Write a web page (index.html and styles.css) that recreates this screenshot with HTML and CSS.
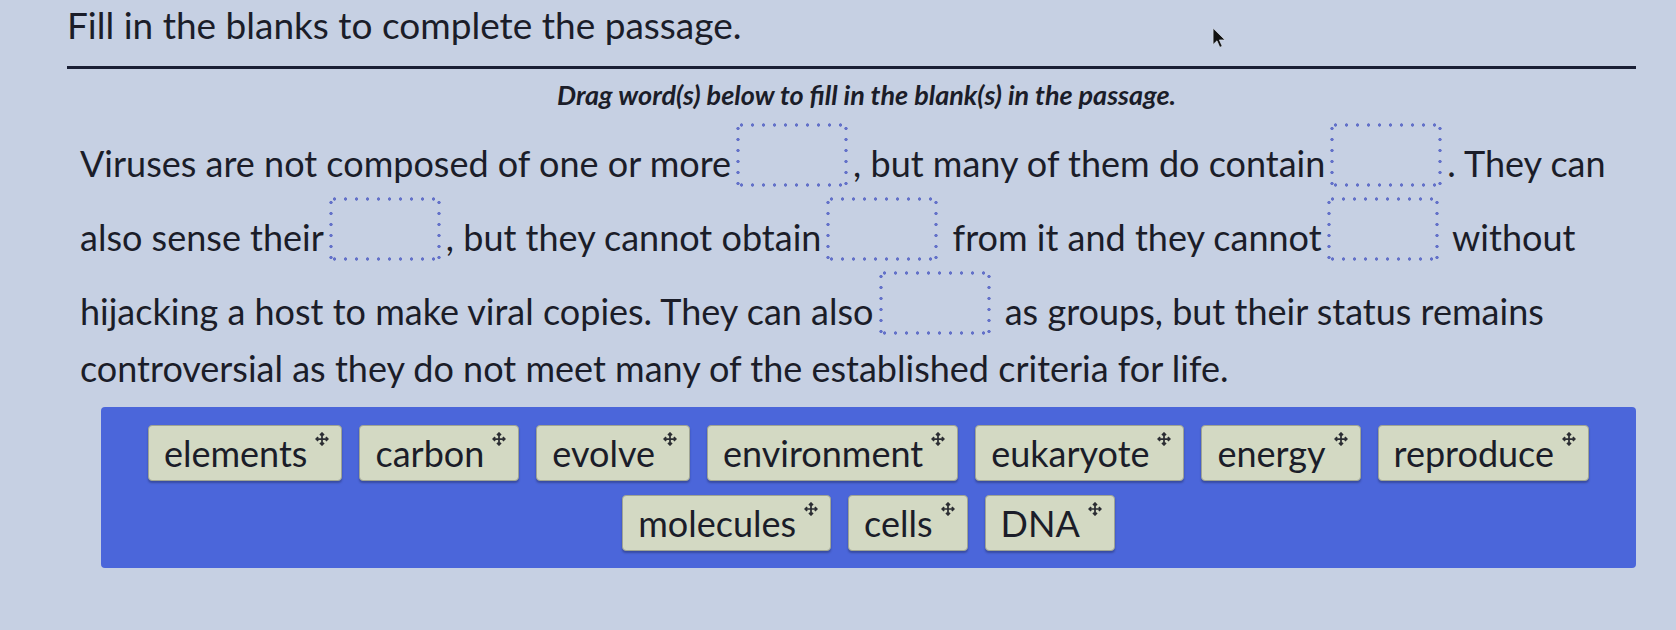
FILE: index.html
```html
<!DOCTYPE html>
<html lang="en">
<head>
    <meta charset="UTF-8">
    <meta name="viewport" content="width=device-width, initial-scale=1.0">
    <title>Fill in the blanks</title>
    <link rel="stylesheet" href="styles.css">
</head>
<body>
    <div class="page">
        <h1 class="title">Fill in the blanks to complete the passage.</h1>
        <hr class="rule">

        <p class="instructions">Drag word(s) below to fill in the blank(s) in the passage.</p>

        <p class="passage">
            Viruses are not composed of one or more<span class="blank"></span>, but many of them do contain<span class="blank"></span>. They can also sense their<span class="blank"></span>, but they cannot obtain<span class="blank"></span> from it and they cannot<span class="blank"></span> without hijacking a host to make viral copies. They can also<span class="blank"></span> as groups, but their status remains controversial as they do not meet many of the established criteria for life.
        </p>

        <div class="word-bank">
            <div class="word">elements<svg class="move" viewBox="0 0 12 12"><path d="M6 1v10M1 6h10M4.3 2.7L6 1l1.7 1.7M4.3 9.3L6 11l1.7-1.7M2.7 4.3L1 6l1.7 1.7M9.3 4.3L11 6 9.3 7.7"/></svg></div>
            <div class="word">carbon<svg class="move" viewBox="0 0 12 12"><path d="M6 1v10M1 6h10M4.3 2.7L6 1l1.7 1.7M4.3 9.3L6 11l1.7-1.7M2.7 4.3L1 6l1.7 1.7M9.3 4.3L11 6 9.3 7.7"/></svg></div>
            <div class="word">evolve<svg class="move" viewBox="0 0 12 12"><path d="M6 1v10M1 6h10M4.3 2.7L6 1l1.7 1.7M4.3 9.3L6 11l1.7-1.7M2.7 4.3L1 6l1.7 1.7M9.3 4.3L11 6 9.3 7.7"/></svg></div>
            <div class="word">environment<svg class="move" viewBox="0 0 12 12"><path d="M6 1v10M1 6h10M4.3 2.7L6 1l1.7 1.7M4.3 9.3L6 11l1.7-1.7M2.7 4.3L1 6l1.7 1.7M9.3 4.3L11 6 9.3 7.7"/></svg></div>
            <div class="word">eukaryote<svg class="move" viewBox="0 0 12 12"><path d="M6 1v10M1 6h10M4.3 2.7L6 1l1.7 1.7M4.3 9.3L6 11l1.7-1.7M2.7 4.3L1 6l1.7 1.7M9.3 4.3L11 6 9.3 7.7"/></svg></div>
            <div class="word">energy<svg class="move" viewBox="0 0 12 12"><path d="M6 1v10M1 6h10M4.3 2.7L6 1l1.7 1.7M4.3 9.3L6 11l1.7-1.7M2.7 4.3L1 6l1.7 1.7M9.3 4.3L11 6 9.3 7.7"/></svg></div>
            <div class="word">reproduce<svg class="move" viewBox="0 0 12 12"><path d="M6 1v10M1 6h10M4.3 2.7L6 1l1.7 1.7M4.3 9.3L6 11l1.7-1.7M2.7 4.3L1 6l1.7 1.7M9.3 4.3L11 6 9.3 7.7"/></svg></div>
            <div class="word">molecules<svg class="move" viewBox="0 0 12 12"><path d="M6 1v10M1 6h10M4.3 2.7L6 1l1.7 1.7M4.3 9.3L6 11l1.7-1.7M2.7 4.3L1 6l1.7 1.7M9.3 4.3L11 6 9.3 7.7"/></svg></div>
            <div class="word">cells<svg class="move" viewBox="0 0 12 12"><path d="M6 1v10M1 6h10M4.3 2.7L6 1l1.7 1.7M4.3 9.3L6 11l1.7-1.7M2.7 4.3L1 6l1.7 1.7M9.3 4.3L11 6 9.3 7.7"/></svg></div>
            <div class="word">DNA<svg class="move" viewBox="0 0 12 12"><path d="M6 1v10M1 6h10M4.3 2.7L6 1l1.7 1.7M4.3 9.3L6 11l1.7-1.7M2.7 4.3L1 6l1.7 1.7M9.3 4.3L11 6 9.3 7.7"/></svg></div>
        </div>
    </div>

    <!-- mouse pointer resting over the header -->
    <svg class="pointer" viewBox="0 0 12 20"><path d="M1 1v15l3.6-3.4 2.6 6 2.2-1-2.6-5.8H12z"/></svg>
</body>
</html>
```

FILE: styles.css
```css
* {
    margin: 0;
    padding: 0;
    box-sizing: border-box;
}

body {
    background-color: #c6d0e3;
    color: #1b1d29;
    font-family: Lato, "Open Sans", sans-serif;
    min-height: 100vh;
}

.page {
    padding: 3px 40px 0 67px;
}

.title {
    font-size: 37px;
    font-weight: 400;
    line-height: 44px;
}

.rule {
    border: none;
    border-top: 3px solid #1a1f35;
    margin-top: 19px;
}

.instructions {
    margin-top: 10px;
    text-align: center;
    font-size: 27px;
    font-weight: 700;
    font-style: italic;
    line-height: 32px;
    padding-left: 30px;
}

.passage {
    margin-top: 7px;
    padding: 0 20px 0 13px;
    font-size: 36px;
    line-height: 56px;
}

/* empty drop target with a sparse dotted outline */
.blank {
    display: inline-block;
    width: 112px;
    height: 64px;
    margin: 5px 5px;
    vertical-align: -15px;
    background:
        radial-gradient(circle, #6371c9 1.4px, transparent 1.9px) left top / 11px 4px repeat-x,
        radial-gradient(circle, #6371c9 1.4px, transparent 1.9px) left bottom / 11px 4px repeat-x,
        radial-gradient(circle, #6371c9 1.4px, transparent 1.9px) left top / 4px 11px repeat-y,
        radial-gradient(circle, #6371c9 1.4px, transparent 1.9px) right top / 4px 11px repeat-y;
}

.word-bank {
    margin: 11px 0 0 34px;
    padding: 18px 20px 17px;
    background-color: #4b66da;
    border-radius: 4px;
    display: flex;
    flex-wrap: wrap;
    justify-content: center;
    gap: 14px 17px;
}

.word {
    display: flex;
    align-items: flex-start;
    height: 56px;
    padding: 0 12px 0 15px;
    background-color: #d3d9c3;
    border: 1px solid #9fa493;
    border-radius: 4px;
    box-shadow: 0 2px 2px rgba(20, 25, 60, 0.35);
    font-size: 36px;
    line-height: 54px;
    cursor: move;
}

.move {
    width: 14px;
    height: 14px;
    margin: 6px 0 0 8px;
    fill: none;
    stroke: #2b2d33;
    stroke-width: 1.5;
}

.pointer {
    position: absolute;
    left: 1212px;
    top: 27px;
    width: 13px;
    height: 22px;
    fill: #111;
    stroke: #dfe5f0;
    stroke-width: 0.6;
}
```
